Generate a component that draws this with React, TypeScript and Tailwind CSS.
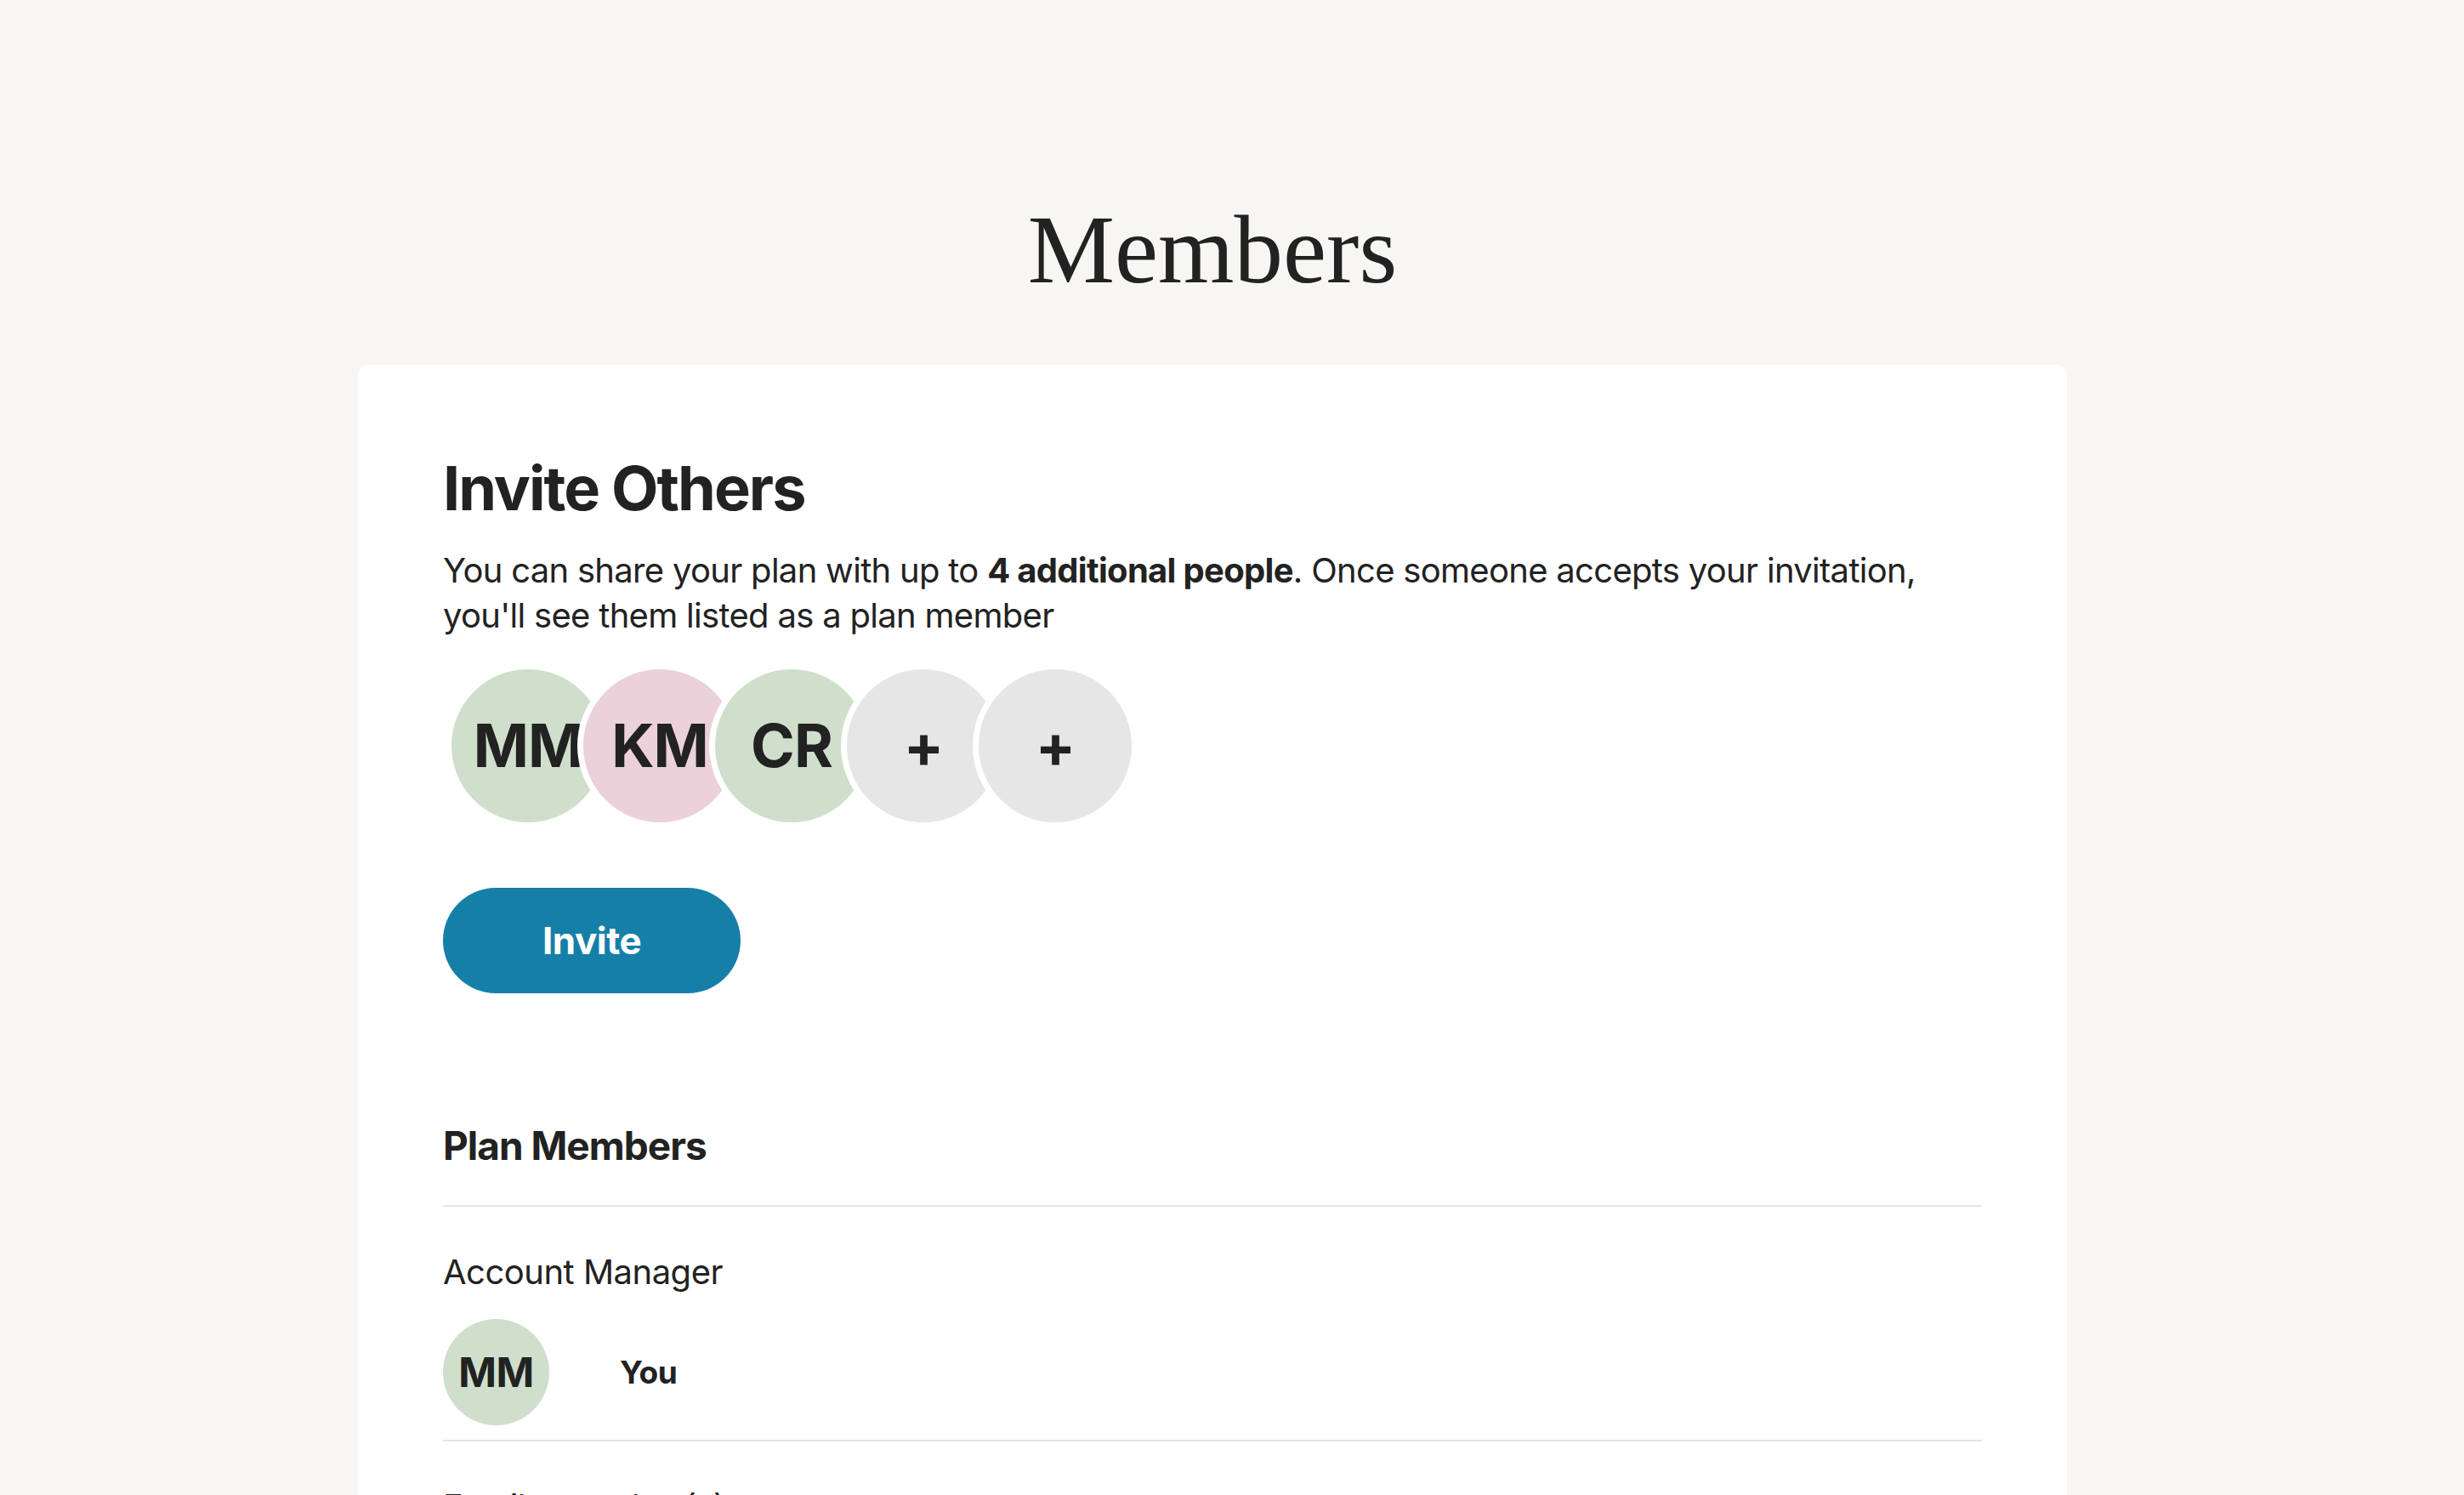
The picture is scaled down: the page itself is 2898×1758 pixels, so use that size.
import React from "react";

const sans = "font-['Inter','Liberation_Sans',sans-serif]";

const invitees = [
  { label: "MM", color: "bg-[#cfdfcc]" },
  { label: "KM", color: "bg-[#ebd2da]" },
  { label: "CR", color: "bg-[#cfdfcc]" },
  { label: "+", color: "bg-[#e6e6e6]" },
  { label: "+", color: "bg-[#e6e6e6]" },
];

export default function App() {
  return (
    <div className={`h-screen overflow-y-auto bg-[#f7f6f3] text-[#222222] ${sans}`}>
      <div className="pt-[236px] pb-[200px] pr-[46px]">
        <h1 className="text-center font-['Liberation_Serif',serif] text-[115px] leading-none">
          Members
        </h1>

        <div className="mx-auto mt-[78px] w-[2010px] rounded-[12px] bg-white px-[100px] pt-[109px] pb-[120px]">
          <h2 className="text-[72px] font-bold leading-none tracking-[-2px]">Invite Others</h2>
          <p className="mt-[34px] text-[40px] leading-[53px] tracking-[-0.7px]">
            You can share your plan with up to <span className="font-bold">4 additional people</span>. Once
            someone accepts your invitation,
            <br />
            you'll see them listed as a plan member
          </p>

          <div className="mt-[30px] ml-[3px] flex">
            {invitees.map((p, i) => (
              <div
                key={i}
                className={`flex h-[194px] w-[194px] shrink-0 items-center justify-center rounded-full border-[7px] border-white ${p.color} ${i > 0 ? "-ml-[39px]" : ""} text-[70px] font-bold leading-none tracking-[-1px]`}
              >
                {p.label}
              </div>
            ))}
          </div>

          <button className="mt-[70px] flex h-[124px] w-[350px] items-center justify-center rounded-full bg-[#167fa8] text-[44px] font-bold leading-none tracking-[-0.5px] text-white">
            Invite
          </button>

          <div className="mt-[156px] border-b-2 border-[#e4e4e4] pb-[47px]">
            <h3 className="text-[46px] font-bold leading-none tracking-[-1px]">Plan Members</h3>
          </div>

          <div className="border-b-2 border-[#e4e4e4] pt-[57px] pb-[17px]">
            <p className="text-[40px] leading-none tracking-[-0.5px]">Account Manager</p>
            <div className="mt-[35px] flex items-center gap-[83px]">
              <div className="flex h-[125px] w-[125px] items-center justify-center rounded-full bg-[#cfdfcc] text-[48px] font-bold leading-none tracking-[-0.5px]">
                MM
              </div>
              <span className="text-[37px] font-bold leading-none tracking-[-0.5px]">You</span>
            </div>
          </div>

          <div className="pt-[57px] pb-[17px]">
            <p className="text-[40px] leading-none tracking-[-0.5px]">Family member(s)</p>
            <div className="mt-[35px] flex items-center gap-[83px]">
              <div className="flex h-[125px] w-[125px] items-center justify-center rounded-full bg-[#ebd2da] text-[48px] font-bold leading-none tracking-[-0.5px]">
                KM
              </div>
              <span className="text-[37px] font-bold leading-none tracking-[-0.5px]">Pending invitation</span>
            </div>
          </div>
        </div>
      </div>
    </div>
  );
}
